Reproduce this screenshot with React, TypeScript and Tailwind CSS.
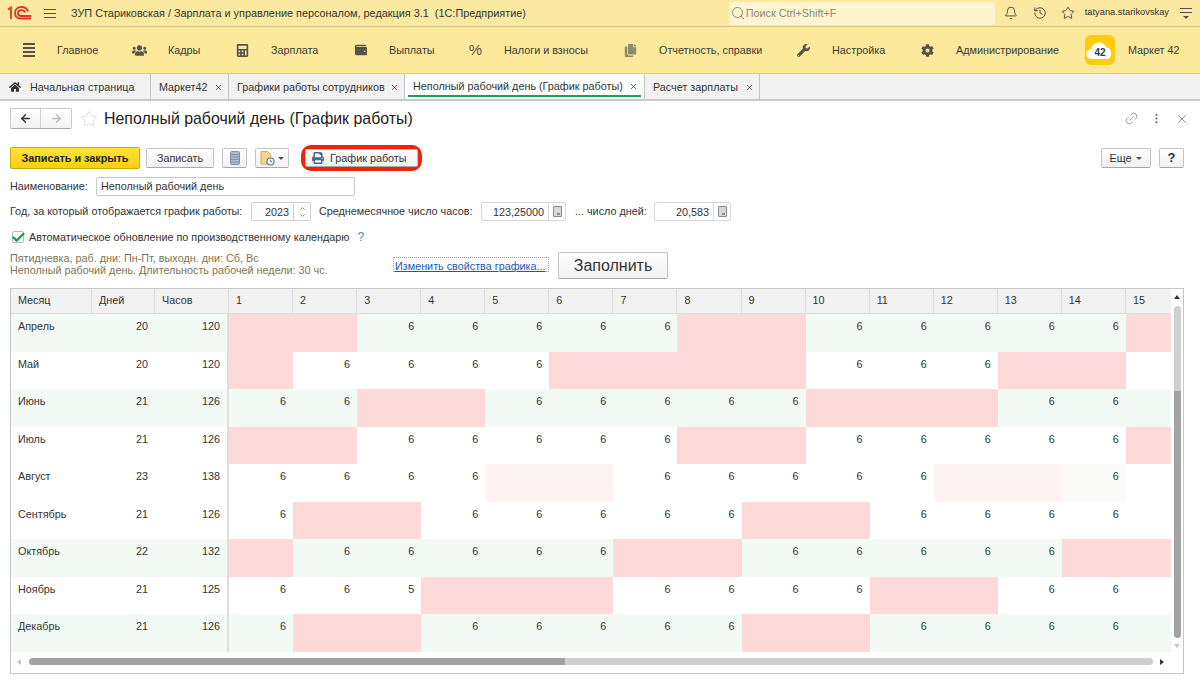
import { ArrowLeft, ArrowRight, Bell, ChevronDown, ChevronUp, History, Link2, MoreVertical, Star, X, Check } from "lucide-react"
import { FaCalculator, FaCog, FaCopy, FaHome, FaPrint, FaUsers, FaWallet, FaWrench } from "react-icons/fa"
import { ReactNode } from "react"

const MENU: { label: string; icon: ReactNode; width: string }[] = [
  { label: "Главное", width: "w-[111px]", icon: <BurgerIcon /> },
  { label: "Кадры", width: "w-[103px]", icon: <FaUsers size={15} /> },
  { label: "Зарплата", width: "w-[118px]", icon: <FaCalculator size={13} /> },
  { label: "Выплаты", width: "w-[115px]", icon: <FaWallet size={12} /> },
  { label: "Налоги и взносы", width: "w-[155px]", icon: <span className="text-[15px]">%</span> },
  { label: "Отчетность, справки", width: "w-[173px]", icon: <FaCopy size={13} className="text-[#8f8a6c]" /> },
  { label: "Настройка", width: "w-[124px]", icon: <FaWrench size={13} /> },
  { label: "Администрирование", width: "w-[165px]", icon: <FaCog size={13} /> },
]

const TABS = [
  { text: "Маркет42", width: "w-[78px]" },
  { text: "Графики работы сотрудников", width: "w-[176px]" },
]

const HEAD = ["Месяц", "Дней", "Часов"]

const ROWS = [
  { name: "Апрель", days: 20, hours: 120, green: true, cells: "pp66666pp66666p" },
  { name: "Май", days: 20, hours: 120, green: false, cells: "p6666pppp666pp-" },
  { name: "Июнь", days: 21, hours: 126, green: true, cells: "66pp66666ppp66-" },
  { name: "Июль", days: 21, hours: 126, green: false, cells: "pp66666pp66666p" },
  { name: "Август", days: 23, hours: 138, green: false, cells: "6666ff66666ffg-" },
  { name: "Сентябрь", days: 21, hours: 126, green: false, cells: "6pp66666pp6666-" },
  { name: "Октябрь", days: 22, hours: 132, green: true, cells: "p66666pp66666pp" },
  { name: "Ноябрь", days: 21, hours: 125, green: false, cells: "665ppp6666pp66-" },
  { name: "Декабрь", days: 21, hours: 126, green: true, cells: "6pp66666pp6666-" },
]

function BurgerIcon() {
  return (
    <span className="flex w-[12px] flex-col gap-[2px]">
      <i className="h-[2px] bg-[#55524a]" />
      <i className="h-[2px] bg-[#55524a]" />
      <i className="h-[2px] bg-[#55524a]" />
      <i className="h-[2px] bg-[#55524a]" />
    </span>
  )
}

function Logo1C() {
  return (
    <svg width="25" height="14" viewBox="0 0 25 14" fill="none" stroke="#e3332a" strokeWidth="1.8">
      <path d="M1 3.500 4 1.500V13" />
      <path d="M21 5.500C20 2.500 17.500 1 14.500 1 10.500 1 8 3.500 8 7s2.500 5.500 6 5.500h10" />
      <path d="M18 6.500C17.500 5 16 4.200 14.500 4.200 12.500 4.200 11 5.300 11 7s1.500 3 3.500 3H24" />
    </svg>
  )
}

function CellIcon() {
  return (
    <span className="flex h-[11px] w-[9px] flex-col justify-end rounded-[1px] border border-[#8a8a8a] bg-[#d8d8d8]">
      <i className="mb-[1px] ml-auto mr-[1px] h-[2px] w-[3px] bg-[#8a8a8a]" />
    </span>
  )
}

function ListIcon() {
  return (
    <svg width="10" height="14" viewBox="0 0 10 14">
      <rect x="0.500" y="0.500" width="9" height="13" rx="1" fill="#a9bccd" stroke="#7b93a8" />
      <path d="M1 3.500h8M1 6h8M1 8.500h8M1 11h8" stroke="#6d869c" strokeWidth="0.800" />
    </svg>
  )
}

function DocClockIcon() {
  return (
    <svg width="15" height="15" viewBox="0 0 15 15">
      <path d="M1 .5h6.500L10.500 3.500V13H1z" fill="#f3d68c" stroke="#d9a94e" />
      <circle cx="10.500" cy="10.500" r="3.500" fill="#fff" stroke="#4f7fa8" strokeWidth="1.200" />
      <path d="M10.500 8.500v2h1.500" fill="none" stroke="#4f7fa8" />
    </svg>
  )
}

function Btn({ children, className }: { children: ReactNode; className: string }) {
  return (
    <div className={`flex h-[20px] items-center justify-center rounded-[2px] border border-[#c4c4c4] border-b-[#a8a8a8] bg-gradient-to-b from-white to-[#f1f1f1] text-[#333] ${className}`}>
      {children}
    </div>
  )
}

function Table() {
  const headCls = "h-[25px] border-r border-b border-[#dcdcdc] bg-[#f2f2f2] pl-[7px] pt-[3px] text-[#333]"
  return (
    <div className="mx-[10px] mt-[9px] flex h-[386px] w-[1174px] flex-col border border-[#c6c6c6] bg-white">
      <div className="flex h-[363px]">
        <div className="h-[363px] w-[1160px] overflow-hidden">
          <div className="grid grid-cols-[81px_63px_74px_repeat(15,64.07px)]">
            {HEAD.map((h) => (
              <div key={h} className={headCls}>{h}</div>
            ))}
            {Array.from({ length: 15 }, (_, i) => (
              <div key={i} className={headCls}>{i + 1}</div>
            ))}
          </div>
          <div className="grid grid-cols-[81px_63px_74px_repeat(15,64.07px)] auto-rows-[37.5px]">
            {ROWS.map((r) => {
              const bg = r.green ? "bg-[#f3faf6]" : "bg-white"
              return [
                <div key={r.name} className={`${bg} pl-[7px] pt-[4px]`}>{r.name}</div>,
                <div key={r.name + "d"} className={`${bg} pr-[7px] pt-[4px] text-right`}>{r.days}</div>,
                <div key={r.name + "h"} className={`${bg} border-r-2 border-[#dedede] pr-[7px] pt-[4px] text-right`}>{r.hours}</div>,
                ...r.cells.split("").map((c, i) => {
                  let cls = bg
                  if (c === "p") cls = "bg-[#fed9d9]"
                  if (c === "f") cls = "bg-[#fff4f3]"
                  if (c === "g") cls = "bg-[#fafbf8]"
                  const value = c === "6" || c === "g" ? "6" : c === "5" ? "5" : ""
                  return (
                    <div key={r.name + i} className={`${cls} pr-[7px] pt-[4px] text-right`}>
                      {value}
                    </div>
                  )
                }),
              ]
            })}
          </div>
        </div>
        <div className="flex w-[12px] flex-col items-center">
          <div className="mt-[6px] h-0 w-0 border-x-[3px] border-b-[4px] border-x-transparent border-b-[#333]" />
          <div className="mt-[7px] h-[85px] w-[7px] rounded-t-[4px] bg-[#cfcfcf]" />
          <div className="h-[247px] w-[7px] rounded-b-[4px] bg-[#a2a2a2]" />
          <div className="mt-[6px] h-0 w-0 border-x-[3px] border-t-[4px] border-x-transparent border-t-[#c4c4c4]" />
        </div>
      </div>
      <div className="flex h-[21px] items-center pb-[2px] pl-[6px]">
        <div className="h-0 w-0 border-y-[3px] border-r-[4px] border-y-transparent border-r-[#c4c4c4]" />
        <div className="ml-[8px] h-[7px] w-[536px] rounded-l-[4px] bg-[#a2a2a2]" />
        <div className="h-[7px] w-[588px] rounded-r-[4px] bg-[#cfcfcf]" />
        <div className="ml-[7px] h-0 w-0 border-y-[3px] border-l-[4px] border-y-transparent border-l-[#333]" />
      </div>
    </div>
  )
}

export default function App() {
  return (
    <div className="flex h-[684px] w-[1200px] flex-col overflow-hidden bg-white font-['Liberation_Sans',sans-serif] text-[10.8px] text-[#333]">
      {/* title bar */}
      <div className="flex h-[27px] items-center border-b border-[#cfc28a] bg-[#fbe9a1] pl-[7px] pr-[8px]">
        <Logo1C />
        <span className="ml-[12px] flex w-[12px] flex-col gap-[3px]">
          <i className="h-px bg-[#55523f]" />
          <i className="h-px bg-[#55523f]" />
          <i className="h-px bg-[#55523f]" />
        </span>
        <span className="ml-[15px] text-[10.87px] text-[#333]">ЗУП Стариковская / Зарплата и управление персоналом, редакция 3.1&nbsp;&nbsp;(1С:Предприятие)</span>
        <div className="ml-auto flex h-[23px] w-[266px] items-center rounded-[2px] bg-[#fdf5cf] pl-[2px] text-[#8a8a7a]">
          <svg width="14" height="14" viewBox="0 0 14 14" fill="none" stroke="#8a8a7a" strokeWidth="1">
            <circle cx="6.500" cy="6.500" r="5" />
            <path d="m10 10 3 3" />
          </svg>
          <span className="ml-[1px]">Поиск Ctrl+Shift+F</span>
        </div>
        <Bell size={14} strokeWidth={1.4} className="ml-[9px]" />
        <History size={14} strokeWidth={1.4} className="ml-[15px]" />
        <Star size={14} strokeWidth={1.4} className="ml-[14px]" />
        <span className="ml-[10px] text-[9.300px]">tatyana.starikovskay</span>
        <span className="ml-[11px] flex w-[12px] flex-col items-center gap-[3px]">
          <i className="h-px w-full bg-[#55523f]" />
          <i className="h-px w-full bg-[#55523f]" />
          <i className="h-0 w-0 border-x-[3px] border-t-[3px] border-x-transparent border-t-[#55523f]" />
        </span>
      </div>

      {/* main menu */}
      <div className="flex h-[47px] items-center border-b border-[#d8cc8e] bg-[#fce99c] pl-[21px] text-[#3a3a32]">
        {MENU.map((m) => (
          <div key={m.label} className={`flex items-center ${m.width}`}>
            <span className="flex w-[15px] justify-center text-[#55524a]">{m.icon}</span>
            <span className="ml-[21px]">{m.label}</span>
          </div>
        ))}
        <div className="relative flex h-[30px] w-[30px] items-center justify-center rounded-[6px] bg-[#fdcd0a]">
          <svg width="28" height="20" viewBox="0 0 28 20" fill="white">
            <path d="M6 19a5 5 0 0 1-1-10 8 8 0 0 1 15-2 6.500 6.500 0 0 1 2 12z" />
          </svg>
          <span className="absolute top-[10px] text-[10px] font-bold text-[#2b3a55]">42</span>
        </div>
        <span className="ml-[13px]">Маркет 42</span>
      </div>

      {/* tabs */}
      <div className="flex h-[27px] border-b-2 border-[#c8c8c8] bg-[#f2f2f2] text-[#333]">
        <div className="flex w-[151px] items-center border-r border-[#c4c4c4] pl-[9px] pt-[1px]">
          <FaHome size={12} />
          <span className="ml-[9px]">Начальная страница</span>
        </div>
        {TABS.map((t) => (
          <div key={t.text} className={`flex items-center justify-between border-r border-[#c4c4c4] pl-[8px] pr-[5px] pt-[1px] ${t.width}`}>
            <span>{t.text}</span>
            <X size={9} />
          </div>
        ))}
        <div className="w-[240px] border-r border-[#c4c4c4] bg-white px-[3px]">
          <div className="flex h-[23px] items-center justify-between border-b-2 border-[#19a15f] pl-[5px] pr-[3px] pt-[3px]">
            <span>Неполный рабочий день (График работы)</span>
            <X size={9} />
          </div>
        </div>
        <div className="flex w-[115px] items-center justify-between border-r border-[#c4c4c4] pl-[8px] pr-[5px] pt-[1px]">
          <span>Расчет зарплаты</span>
          <X size={9} />
        </div>
      </div>

      {/* form header */}
      <div className="mt-[7px] flex h-[21px] items-center pl-[10px] pr-[11px]">
        <div className="flex h-[21px] w-[62px] rounded-[2px] border border-[#c8c8c8] border-b-[#a8a8a8] bg-gradient-to-b from-white to-[#f3f3f3]">
          <div className="flex w-[30px] items-center justify-center border-r border-[#d0d0d0]">
            <ArrowLeft size={13} strokeWidth={2.5} className="text-[#333]" />
          </div>
          <div className="flex flex-1 items-center justify-center">
            <ArrowRight size={13} strokeWidth={2.5} className="text-[#bdbdbd]" />
          </div>
        </div>
        <Star size={18} strokeWidth={1} className="ml-[8px] text-[#d4d4d4]" />
        <span className="ml-[6px] text-[15.900px] text-[#222]">Неполный рабочий день (График работы)</span>
        <Link2 size={15} strokeWidth={1.2} className="ml-auto -rotate-45 text-[#7f7f7f]" />
        <MoreVertical size={13} className="ml-[11px] text-[#666]" />
        <X size={14} strokeWidth={1.2} className="ml-[12px] text-[#666]" />
      </div>

      {/* command bar */}
      <div className="mt-[19px] flex h-[20px] items-center pl-[10px] pr-[16px]">
        <div className="flex h-[22px] w-[130px] items-center justify-center rounded-[2px] border border-[#caa90a] bg-gradient-to-b from-[#ffe434] to-[#f9cf0c] font-bold text-[#222]">
          Записать и закрыть
        </div>
        <Btn className="ml-[6px] w-[68px]">Записать</Btn>
        <Btn className="ml-[8px] w-[25px]">
          <ListIcon />
        </Btn>
        <Btn className="ml-[8px] w-[34px] gap-[3px]">
          <DocClockIcon />
          <i className="h-0 w-0 border-x-[3px] border-t-[3px] border-x-transparent border-t-[#555]" />
        </Btn>
        <div className="ml-[12px] rounded-[10px] border-[4px] border-[#f0220c]">
          <Btn className="!h-[18px] w-[113px] !justify-start gap-[6px] pl-[6px]">
            <FaPrint size={12} className="text-[#4a6a90]" />
            <span>График работы</span>
          </Btn>
        </div>
        <Btn className="ml-auto w-[50px] gap-[5px]">
          <span>Еще</span>
          <i className="h-0 w-0 border-x-[3px] border-t-[3px] border-x-transparent border-t-[#555]" />
        </Btn>
        <Btn className="ml-[8px] w-[25px] text-[13px] font-bold">?</Btn>
      </div>

      {/* fields */}
      <div className="mt-[9px] flex h-[19px] items-center pl-[10px]">
        <span className="w-[86px]">Наименование:</span>
        <div className="flex h-[19px] w-[259px] items-center rounded-[2px] border border-[#c8c8c8] pl-[4px]">Неполный рабочий день</div>
      </div>

      <div className="mt-[6px] flex h-[19px] items-center pl-[10px]">
        <span className="w-[241px]">Год, за который отображается график работы:</span>
        <div className="flex h-[19px] w-[60px] rounded-[2px] border border-[#d0d0d0]">
          <span className="flex-1 pr-[4px] pt-[1px] text-right">2023</span>
          <span className="flex w-[17px] flex-col items-center justify-center border-l border-[#d0d0d0]">
            <ChevronUp size={7} />
            <ChevronDown size={7} />
          </span>
        </div>
        <span className="ml-[8px] w-[162px]">Среднемесячное число часов:</span>
        <div className="flex h-[19px] w-[85px] rounded-[2px] border border-[#d8d8d8]">
          <span className="flex-1 pr-[4px] pt-[1px] text-right">123,25000</span>
          <span className="flex w-[17px] items-center justify-center border-l border-[#d8d8d8]"><CellIcon /></span>
        </div>
        <span className="ml-[9px] w-[79px]">... число дней:</span>
        <div className="flex h-[19px] w-[77px] rounded-[2px] border border-[#d8d8d8]">
          <span className="flex-1 pr-[4px] pt-[1px] text-right">20,583</span>
          <span className="flex w-[17px] items-center justify-center border-l border-[#d8d8d8]"><CellIcon /></span>
        </div>
      </div>

      <div className="mt-[9px] flex h-[14px] items-center pl-[12px]">
        <span className="flex h-[12px] w-[12px] items-center justify-center rounded-[2px] border border-[#b8b8b8]">
          <Check size={15} strokeWidth={3.500} className="shrink-0 text-[#15a04a]" />
        </span>
        <span className="ml-[5px]">Автоматическое обновление по производственному календарю</span>
        <span className="ml-[8px] text-[12px] text-[#3d8bd0]">?</span>
      </div>

      <div className="mt-[7px] flex h-[28px] pl-[10px]">
        <div className="w-[383px] pt-[1px] leading-[12px] text-[#7c7650]">
          <div>Пятидневка, раб. дни: Пн-Пт, выходн. дни: Сб, Вс</div>
          <div>Неполный рабочий день. Длительность рабочей недели: 30 чс.</div>
        </div>
        <span className="mt-[6px] h-[15px] w-[156px] whitespace-nowrap border border-dotted border-[#9a9a9a] pl-[1px] text-[#1a56b8] underline">Изменить свойства графика...</span>
        <Btn className="ml-[9px] mt-[1px] !h-[27px] w-[110px] text-[16px]">Заполнить</Btn>
      </div>

      <Table />
    </div>
  )
}
